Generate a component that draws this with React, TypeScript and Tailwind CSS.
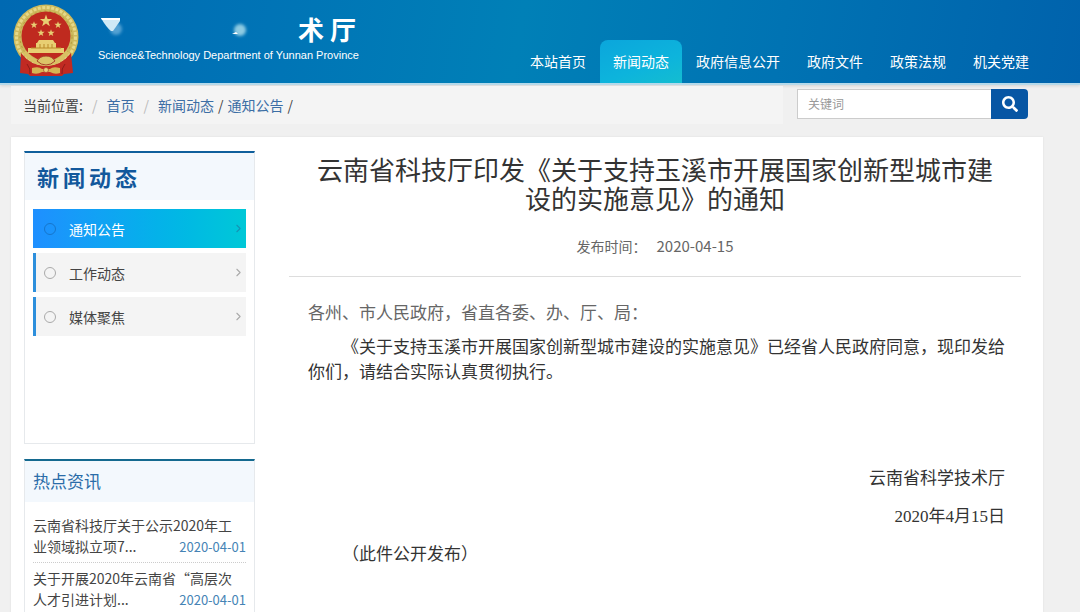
import { ChevronRight } from "lucide-react";
import { FaSearch } from "react-icons/fa";

interface NavItem {
  label: string;
  active?: boolean;
}

interface HotItem {
  title: string;
  rest: string;
  date: string;
}

const navItems: NavItem[] = [
  { label: "本站首页" },
  { label: "新闻动态", active: true },
  { label: "政府信息公开" },
  { label: "政府文件" },
  { label: "政策法规" },
  { label: "机关党建" },
];

const menuItems: NavItem[] = [
  { label: "通知公告", active: true },
  { label: "工作动态" },
  { label: "媒体聚焦" },
];

const hotItems: HotItem[] = [
  { title: "云南省科技厅关于公示2020年工", rest: "业领域拟立项7...", date: "2020-04-01" },
  { title: "关于开展2020年云南省“高层次", rest: "人才引进计划...", date: "2020-04-01" },
];

const STAR = "M0-10 2.4-3.2 9.5-3.1 3.8 1.2 5.9 8.1 0 4-5.9 8.1-3.8 1.2-9.5-3.1-2.4-3.2Z";

function Emblem() {
  return (
    <svg viewBox="0 0 66 72" className="h-[72px] w-[66px] shrink-0" aria-hidden="true">
      <circle cx="33" cy="33" r="32.5" fill="#cdb95c" />
      <circle cx="33" cy="33" r="29.5" fill="none" stroke="#e6d888" strokeWidth="3" strokeDasharray="3 1.5" />
      <circle cx="33" cy="33" r="26" fill="none" stroke="#b59a3c" strokeWidth="1" strokeDasharray="2 3" />
      <circle cx="33" cy="32" r="24.5" fill="#bf2a1f" />
      <g fill="#e8cf72">
        <path d={STAR} transform="translate(33 17) scale(.65)" />
        <path d={STAR} transform="translate(21 21) scale(.38)" />
        <path d={STAR} transform="translate(45 21) scale(.38)" />
        <path d={STAR} transform="translate(28 29) scale(.38)" />
        <path d={STAR} transform="translate(38 29) scale(.38)" />
        <path d="M26 36h14l2 3H24Z" />
        <path d="M23 39h20v5h8v5H15v-5h8Z" />
      </g>
      <path d="M18 44h30M27 40v4M31 40v4M35 40v4M39 40v4" stroke="#b98a28" strokeWidth="1" />
      <path d="M8 49q10 13 25 13t25-13l2 20-9 1-2 2H17l-2-2-8-1Z" fill="#c12a22" />
      <path d="M11 48q10 12 22 12t22-12" fill="none" stroke="#d9c163" strokeWidth="4" />
      <path d="M24 57q3-5 9-5t9 5q-4 4-9 4t-9-4Z" fill="#dcc468" stroke="#a8412a" />
      <path d="M14 60q4 5 3 10M52 60q-4 5-3 10" fill="none" stroke="#8e1c18" strokeWidth="1" />
      <path d="M19 64q7-2 10 1h8q3-3 10-1v5q-5 2-10-1h-8q-5 3-10 1Z" fill="#d6b552" />
      <circle cx="33" cy="66" r="2.5" fill="#e9d27c" stroke="#a8412a" strokeWidth=".7" />
    </svg>
  );
}

/* Leftover strokes of the faded part of the site name */
function FadedName() {
  return (
    <svg viewBox="0 0 200 30" className="h-[30px] w-[200px]" aria-hidden="true">
      <defs>
        <filter id="soft" x="-50%" y="-50%" width="200%" height="200%">
          <feGaussianBlur stdDeviation="1.5" />
        </filter>
      </defs>
      <ellipse cx="18" cy="15" rx="6" ry="6" fill="#8cc5e8" opacity=".6" filter="url(#soft)" />
      <path d="M3 4h19v3l-7 10h-2Q8 13 3 4Z" fill="#cfe9f6" />
      <path d="M3 4h19v2H4Z" fill="#fff" />
      <circle cx="142" cy="16" r="6" fill="#8ecbe2" filter="url(#soft)" />
      <path d="M134 20l4-2 2 2Z" fill="#fff" />
    </svg>
  );
}

function Header() {
  return (
    <header className="flex items-stretch justify-between border-b-2 border-[#b5d9ea] bg-[linear-gradient(100deg,#0069b2_0%,#0074b6_25%,#0080b7_48%,#0073b3_72%,#0062ac_100%)] pr-[38px] pl-[13px] shadow-[0_1px_3px_rgba(0,0,0,0.12)]">
      <div className="flex gap-[19px] pt-1 pb-[7px]">
        <Emblem />
        <div className="flex flex-col pt-[9px] text-white">
          <div className="flex h-8 items-center">
            <FadedName />
            <span className="text-[26px] leading-8 font-bold">术 厅</span>
          </div>
          <span className="font-['Liberation_Sans',Arial,sans-serif] text-[11px] leading-5 whitespace-nowrap">
            Science&amp;Technology Department of Yunnan Province
          </span>
        </div>
      </div>
      <nav className="flex items-end gap-px">
        {navItems.map((item) => (
          <a
            key={item.label}
            href="#"
            className={`flex h-[43px] items-center rounded-t-lg px-[13px] pb-0.5 text-sm whitespace-nowrap text-white ${
              item.active ? "bg-[linear-gradient(160deg,#0ba6dc,#0db4dc_60%,#14bdd0)]" : ""
            }`}
          >
            {item.label}
          </a>
        ))}
      </nav>
    </header>
  );
}

function Toolbar() {
  return (
    <div className="mr-[52px] ml-[11px] flex items-start gap-[14px] pt-px pb-[13px]">
      <nav className="flex h-[38px] flex-1 items-center bg-[#f4f4f4] pl-3 text-sm text-[#444]">
        <span>当前位置:</span>
        <span className="px-[9px] text-[#bbb]">/</span>
        <a href="#" className="text-[#3c6ea5]">首页</a>
        <span className="px-[9px] text-[#bbb]">/</span>
        <a href="#" className="text-[#3c6ea5]">新闻动态</a>
        <span className="px-1">/</span>
        <a href="#" className="text-[#3c6ea5]">通知公告</a>
        <span className="px-1">/</span>
      </nav>
      <form className="mt-[3px] flex h-[30px] w-[231px]" onSubmit={(e) => e.preventDefault()}>
        <input
          type="text"
          aria-label="关键词"
          placeholder="关键词"
          className="min-w-0 flex-1 border border-r-0 border-[#ccc] bg-white px-[10px] text-xs text-[#555] outline-none placeholder:text-[#999]"
        />
        <button
          type="submit"
          aria-label="搜索"
          className="flex w-[37px] items-center justify-center rounded-r-sm bg-[#0756a4] text-white"
        >
          <FaSearch size={16} />
        </button>
      </form>
    </div>
  );
}

function Sidebar() {
  return (
    <aside className="flex w-[231px] shrink-0 flex-col gap-[15px]">
      <section className="min-h-[293px] border border-t-2 border-[#e6e9ec] border-t-[#0f5f9c]">
        <h2 className="bg-[#f3f8fd] px-3 pt-[7px] pb-2 text-[22px] leading-8 font-bold tracking-[4px] text-[#12589c]">
          新闻动态
        </h2>
        <ul className="flex flex-col gap-[5px] px-2 pt-[9px]">
          {menuItems.map((item) => (
            <li key={item.label}>
              <a
                href="#"
                className={`flex h-[39px] items-center border-l-[3px] pr-px pl-2 text-sm ${
                  item.active
                    ? "border-[#1e90ff] bg-linear-to-r from-[#1e90ff] to-[#00c8d7] text-white"
                    : "border-[#2d8fdc] bg-[#f4f4f4] text-[#444]"
                }`}
              >
                <span
                  className={`mr-[13px] size-3 rounded-full border ${
                    item.active ? "border-[#1676cc]" : "border-[#aaa]"
                  }`}
                />
                {item.label}
                <ChevronRight
                  size={13}
                  strokeWidth={2}
                  className={`ml-auto ${item.active ? "text-[#1493b5]" : "text-[#aaa]"}`}
                />
              </a>
            </li>
          ))}
        </ul>
      </section>

      <section className="border border-t-2 border-[#e6e9ec] border-t-[#14698f]">
        <h2 className="bg-[#f3f8fd] px-2 pt-2 pb-[9px] text-[17px] leading-6 text-[#2a6ca8]">热点资讯</h2>
        <ul className="px-2 pt-2">
          {hotItems.map((item) => (
            <li key={item.title} className="border-b border-dotted border-[#ccc] py-[5px] text-sm leading-[21px] text-[#444]">
              <a href="#" className="block">
                <span className="block whitespace-nowrap">{item.title}</span>
                <span className="flex justify-between">
                  <span>{item.rest}</span>
                  <time className="text-[13px] text-[#4583b5]">{item.date}</time>
                </span>
              </a>
            </li>
          ))}
        </ul>
      </section>
    </aside>
  );
}

function Article() {
  return (
    <article className="min-w-0 flex-1 pt-[3px] text-[#333]">
      <h1 className="px-[19px] text-center text-[26px] leading-[29px]">
        云南省科技厅印发《关于支持玉溪市开展国家创新型城市建设的实施意见》的通知
      </h1>
      <div className="flex items-center justify-center border-b border-[#ddd] pt-[23px] pb-[19px] text-sm leading-[22px] text-[#666]">
        <span className="mr-[10px]">发布时间：</span>
        <time className="text-[15px]">2020-04-15</time>
      </div>
      <div className="pt-[22px] pr-4 pl-[19px] text-[17px] leading-[25px]">
        <p className="text-[#666]">各州、市人民政府，省直各委、办、厅、局：</p>
        <p className="mt-[9px] indent-[2em]">
          《关于支持玉溪市开展国家创新型城市建设的实施意见》已经省人民政府同意，现印发给你们，请结合实际认真贯彻执行。
        </p>
        <p className="mt-[81px] text-right">云南省科学技术厅</p>
        <p className="mt-[15px] text-right font-['Liberation_Serif','Noto_Sans_CJK_SC',serif]">2020年4月15日</p>
        <p className="mt-[11px] indent-[2em]">（此件公开发布）</p>
      </div>
    </article>
  );
}

export default function App() {
  return (
    <div
      lang="zh-CN"
      className="h-screen overflow-hidden bg-[#f0f0f0] font-['Noto_Sans_CJK_SC','Noto_Sans',sans-serif]"
    >
      <Header />
      <Toolbar />
      <main className="mr-[37px] ml-[11px] flex min-h-screen items-start gap-[34px] bg-white pt-[14px] pr-[22px] pl-[13px] shadow-[0_0_2px_rgba(0,0,0,0.08)]">
        <Sidebar />
        <Article />
      </main>
    </div>
  );
}
